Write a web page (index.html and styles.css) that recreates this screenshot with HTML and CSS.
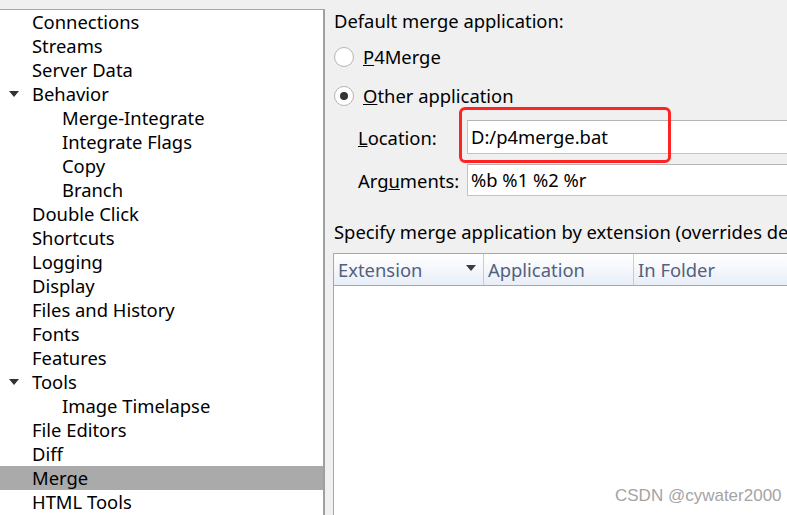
FILE: index.html
```html
<!DOCTYPE html>
<html>
<head>
<meta charset="utf-8">
<link rel="stylesheet" href="styles.css">
</head>
<body>
<div class="app">
  <div class="tree">
    <div class="node">Connections</div>
    <div class="node">Streams</div>
    <div class="node">Server Data</div>
    <div class="node open"><span class="twisty"></span>Behavior</div>
    <div class="node child">Merge-Integrate</div>
    <div class="node child">Integrate Flags</div>
    <div class="node child">Copy</div>
    <div class="node child">Branch</div>
    <div class="node">Double Click</div>
    <div class="node">Shortcuts</div>
    <div class="node">Logging</div>
    <div class="node">Display</div>
    <div class="node">Files and History</div>
    <div class="node">Fonts</div>
    <div class="node">Features</div>
    <div class="node open"><span class="twisty"></span>Tools</div>
    <div class="node child">Image Timelapse</div>
    <div class="node">File Editors</div>
    <div class="node">Diff</div>
    <div class="node selected">Merge</div>
    <div class="node">HTML Tools</div>
  </div>
  <div class="pane">
    <div class="heading">Default merge application:</div>
    <div class="radio-row first"><span class="radio"></span><span><u>P</u>4Merge</span></div>
    <div class="radio-row second"><span class="radio checked"></span><span><u>O</u>ther application</span></div>
    <div class="field loc">
      <span class="flabel"><u>L</u>ocation:</span>
      <div class="input tall">D:/p4merge.bat</div>
      <div class="highlight"></div>
    </div>
    <div class="field args">
      <span class="flabel">Arg<u>u</u>ments:</span>
      <div class="input">%b %1 %2 %r</div>
    </div>
    <div class="heading spec">Specify merge application by extension (overrides default)</div>
    <div class="table">
      <div class="thead">
        <div class="th">Extension<span class="sort"></span></div>
        <div class="th">Application</div>
        <div class="th last">In Folder</div>
      </div>
      <div class="tbody"></div>
    </div>
  </div>
</div>
<div class="watermark">CSDN @cywater2000</div>
</body>
</html>
```
FILE: styles.css
```css
html, body {
  margin: 0;
  padding: 0;
  width: 787px;
  height: 515px;
  overflow: hidden;
  background: #f0f0f0;
  font-family: "Noto Sans", "Open Sans", sans-serif;
  font-size: 18.4px;
  color: #000;
}
.app {
  display: flex;
  height: 515px;
}
.tree {
  margin-top: 9px;
  width: 323px;
  flex: none;
  background: #fff;
  border-top: 1px solid #a8a8a8;
  border-right: 2px solid #a0a0a0;
}
.node {
  height: 24px;
  line-height: 24px;
  padding-left: 32px;
  position: relative;
  white-space: nowrap;
}
.node.child {
  padding-left: 62px;
}
.node.selected {
  background: #aaaaaa;
}
.twisty {
  position: absolute;
  left: 9px;
  top: 9px;
  width: 0;
  height: 0;
  border-left: 5px solid transparent;
  border-right: 5px solid transparent;
  border-top: 6px solid #333;
}
.pane {
  width: 600px;
  flex: none;
  padding: 9px 0 0 9px;
  display: flex;
  flex-direction: column;
}
.heading {
  height: 24px;
  line-height: 24px;
  white-space: nowrap;
}
.radio-row {
  display: flex;
  align-items: center;
  gap: 9px;
  height: 24px;
  line-height: 24px;
}
.radio-row.first { margin-top: 12px; }
.radio-row.second { margin-top: 15px; }
.radio {
  width: 18px;
  height: 18px;
  border: 1px solid #b4b4b4;
  border-radius: 50%;
  background: #fff;
  display: flex;
  align-items: center;
  justify-content: center;
}
.radio.checked::after {
  content: "";
  width: 8px;
  height: 8px;
  border-radius: 50%;
  background: #333;
}
.field {
  display: flex;
  align-items: center;
  position: relative;
  padding-left: 24px;
}
.field.loc { margin-top: 12px; }
.field.args { margin-top: 10px; }
.flabel {
  width: 109px;
  flex: none;
  white-space: nowrap;
}
.input {
  flex: 1;
  height: 30px;
  line-height: 30px;
  background: #fff;
  border: 1px solid #c4c4c4;
  border-top-color: #b4b4b4;
  padding-left: 3px;
  white-space: nowrap;
}
.input.tall {
  height: 32px;
  line-height: 32px;
}
.highlight {
  position: absolute;
  left: 125px;
  top: -13px;
  width: 206px;
  height: 50px;
  border: 3px solid #ff2424;
  border-radius: 6px;
}
.heading.spec {
  margin-top: 24px;
}
.table {
  margin-top: 9px;
  margin-left: -1px;
  flex: 1;
  display: flex;
  flex-direction: column;
  border-top: 1px solid #a8a8a8;
  border-left: 1px solid #a8a8a8;
}
.thead {
  display: flex;
  height: 31px;
  border-bottom: 1px solid #a8a8a8;
  background: linear-gradient(#ffffff, #f4f7fc 50%, #e8eef7);
}
.th {
  width: 145px;
  padding-left: 4px;
  border-right: 1px solid #c5cdd9;
  line-height: 31px;
  color: #52617d;
  position: relative;
  white-space: nowrap;
}
.th.last {
  border-right: none;
  flex: 1;
}
.sort {
  position: absolute;
  left: 132px;
  top: 11px;
  width: 0;
  height: 0;
  border-left: 5px solid transparent;
  border-right: 5px solid transparent;
  border-top: 6px solid #3c3c3c;
}
.tbody {
  flex: 1;
  background: #fff;
}
.watermark {
  position: absolute;
  left: 615px;
  top: 485px;
  font-family: "Liberation Sans", Arial, sans-serif;
  font-size: 17px;
  line-height: 22px;
  color: #a4a4a4;
  white-space: nowrap;
}
```
